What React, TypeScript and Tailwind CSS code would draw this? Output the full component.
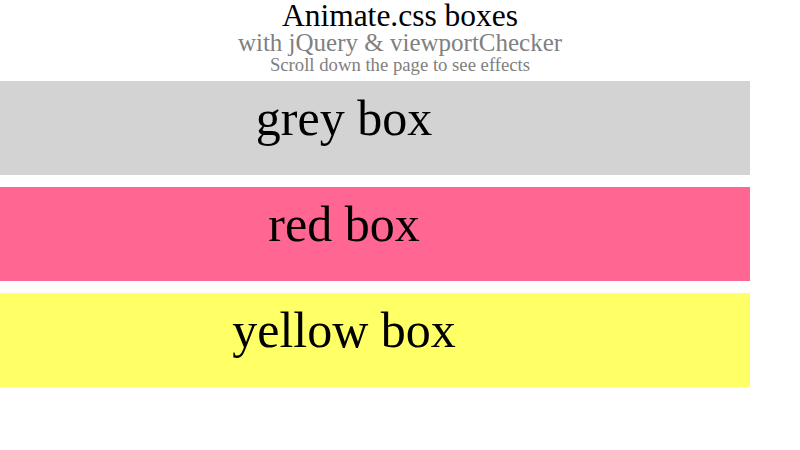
const boxes = [
  { label: "grey box", bg: "bg-[#d3d3d3]" },
  { label: "red box", bg: "bg-[#ff6692]" },
  { label: "yellow box", bg: "bg-[#ffff66]" },
];

export default function App() {
  return (
    <div className="w-[800px] h-[450px] bg-white overflow-hidden font-['Liberation_Serif',serif] text-black">
      <header className="flex flex-col items-center pt-px pb-[7px]">
        <h1 className="text-[31.5px] leading-[30px]">Animate.css boxes</h1>
        <h2 className="text-[25px] leading-[24px] text-[#808080]">
          with jQuery &amp; viewportChecker
        </h2>
        <p className="text-[18.7px] leading-[19px] text-[#808080]">
          Scroll down the page to see effects
        </p>
      </header>

      <div className="flex flex-col gap-[12px]">
        {boxes.map((b) => (
          <div key={b.label} className={`w-[750px] h-[94px] pt-[12px] pr-[62px] text-center ${b.bg}`}>
            <span className="text-[50px] leading-none">{b.label}</span>
          </div>
        ))}
      </div>
    </div>
  );
}
